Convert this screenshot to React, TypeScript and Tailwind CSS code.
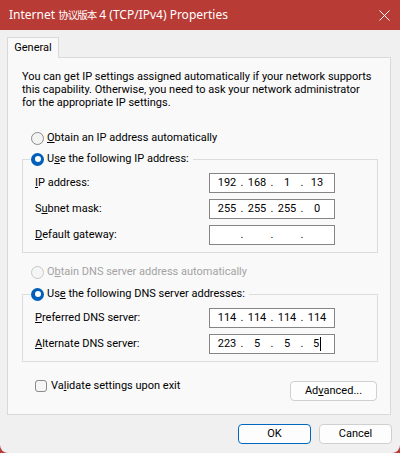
import React from 'react';

const font = "font-['Roboto','Noto_Sans_CJK_SC',sans-serif]";

// radio button in the Windows 11 look
const Radio = ({ checked, disabled }: { checked?: boolean; disabled?: boolean }) => {
  if (checked) {
    return (
      <span className="w-[13px] h-[13px] rounded-full bg-[#005fb8] flex items-center justify-center shrink-0">
        <span className="w-[6px] h-[6px] rounded-full bg-white" />
      </span>
    );
  }
  return (
    <span
      className={
        disabled
          ? 'w-[13px] h-[13px] rounded-full border border-[#c8c8c8] bg-[#f5f5f5] shrink-0'
          : 'w-[13px] h-[13px] rounded-full border border-[#8a8a8a] bg-[#f3f3f3] shrink-0'
      }
    />
  );
};

interface IpBoxProps {
  parts: string[];
  cursor?: boolean;
}

const IpBox: React.FC<IpBoxProps> = ({ parts, cursor }) => (
  <div className="w-[126px] h-[20px] border border-[#858585] bg-white flex items-center pl-[6px] text-black">
    {parts.map((p, i) => (
      <React.Fragment key={i}>
        {i > 0 && <span className="w-[8px] text-center">.</span>}
        <span className="w-[22px] text-center flex items-center justify-center">
          {p}
          {cursor && i === parts.length - 1 && <span className="w-px h-[14px] bg-black ml-px" />}
        </span>
      </React.Fragment>
    ))}
  </div>
);

const FieldRow = ({ label, parts, cursor }: { label: React.ReactNode; parts: string[]; cursor?: boolean }) => (
  <div className="flex items-center h-[20px]">
    <span className="w-[174px]">{label}</span>
    <IpBox parts={parts} cursor={cursor} />
  </div>
);

export default function App() {
  return (
    <div className={`w-[400px] h-[453px] bg-[#b83b35] text-[11px] leading-[16px] text-black ${font}`}>
      <div className="h-full flex flex-col bg-[#f0f0f0] rounded-b-[8px] overflow-hidden">
        {/* Title bar */}
        <div className="h-[30px] shrink-0 bg-[#b83b35] flex items-center justify-between pl-[9px] text-white text-[12px] font-['Noto_Sans','Noto_Sans_CJK_SC',sans-serif]">
          <span>
            Internet <span className="text-[10.5px] tracking-[-1px]">协议版本</span> 4 (TCP/IPv4) Properties
          </span>
          <span className="w-[32px] h-full flex items-center justify-center">
            <svg width="11" height="11" viewBox="0 0 11 11" fill="none" stroke="white" strokeWidth="1">
              <path d="M0.5 0.5 L10.5 10.5 M10.5 0.5 L0.5 10.5" />
            </svg>
          </span>
        </div>

        <div className="pl-[7px] pr-[9px] pt-[7px]">
          {/* Tab */}
          <div className="relative z-10 -mb-px w-[52px] h-[21px] border border-b-0 border-[#d9d9d9] bg-[#f9f9f9] flex items-center justify-center">
            General
          </div>

          {/* Tab panel */}
          <div className="h-[358px] border border-[#d9d9d9] bg-[#f9f9f9] pl-[14px] pr-[12px] pt-[12px] flex flex-col">
            <p className="leading-[13px] whitespace-nowrap">
              You can get IP settings assigned automatically if your network supports
              <br />
              this capability. Otherwise, you need to ask your network administrator
              <br />
              for the appropriate IP settings.
            </p>

            <div className="mt-[21px] h-[16px] ml-[9px] flex items-center gap-[3px]">
              <Radio />
              <span>
                <u>O</u>btain an IP address automatically
              </span>
            </div>

            <fieldset className="mt-[5px] border border-[#dcdcdc] pl-[12px] pb-[7px]">
              <legend className="ml-[-5px] pl-px pr-[4px] h-[16px] flex items-center gap-[3px]">
                <Radio checked />
                <span>
                  U<u>s</u>e the following IP address:
                </span>
              </legend>
              <div className="pt-[6px] flex flex-col gap-[6px]">
                <FieldRow label={<><u>I</u>P address:</>} parts={['192', '168', '1', '13']} />
                <FieldRow label={<>S<u>u</u>bnet mask:</>} parts={['255', '255', '255', '0']} />
                <FieldRow label={<><u>D</u>efault gateway:</>} parts={['', '', '', '']} />
              </div>
            </fieldset>

            <div className="mt-[11px] h-[16px] ml-[9px] flex items-center gap-[3px] text-[#a3a3a3]">
              <Radio disabled />
              <span>
                O<u>b</u>tain DNS server address automatically
              </span>
            </div>

            <fieldset className="mt-[6px] border border-[#dcdcdc] pl-[12px] pb-[7px]">
              <legend className="ml-[-5px] pl-px pr-[4px] h-[16px] flex items-center gap-[3px]">
                <Radio checked />
                <span>
                  Us<u>e</u> the following DNS server addresses:
                </span>
              </legend>
              <div className="pt-[6px] flex flex-col gap-[6px]">
                <FieldRow label={<><u>P</u>referred DNS server:</>} parts={['114', '114', '114', '114']} />
                <FieldRow label={<><u>A</u>lternate DNS server:</>} parts={['223', '5', '5', '5']} cursor />
              </div>
            </fieldset>

            <div className="mt-[17px] flex justify-between items-start">
              <label className="pl-[13px] h-[14px] flex items-center gap-[4px]">
                <span className="w-[12px] h-[12px] rounded-[3px] border border-[#8a8a8a] bg-[#f6f6f6]" />
                <span>
                  Va<u>l</u>idate settings upon exit
                </span>
              </label>
              <button className="mt-[2px] mr-px w-[87px] h-[20px] rounded-[4px] border border-[#d0d0d0] bg-[#fdfdfd]">
                Ad<u>v</u>anced...
              </button>
            </div>
          </div>
        </div>

        {/* Dialog buttons */}
        <div className="mt-[9px] pr-[8px] flex justify-end gap-[8px]">
          <button className="w-[73px] h-[20px] rounded-[4px] border border-[#0067c0] bg-[#fdfdfd]">OK</button>
          <button className="w-[73px] h-[20px] rounded-[4px] border border-[#d0d0d0] bg-[#fdfdfd]">Cancel</button>
        </div>
      </div>
    </div>
  );
}
